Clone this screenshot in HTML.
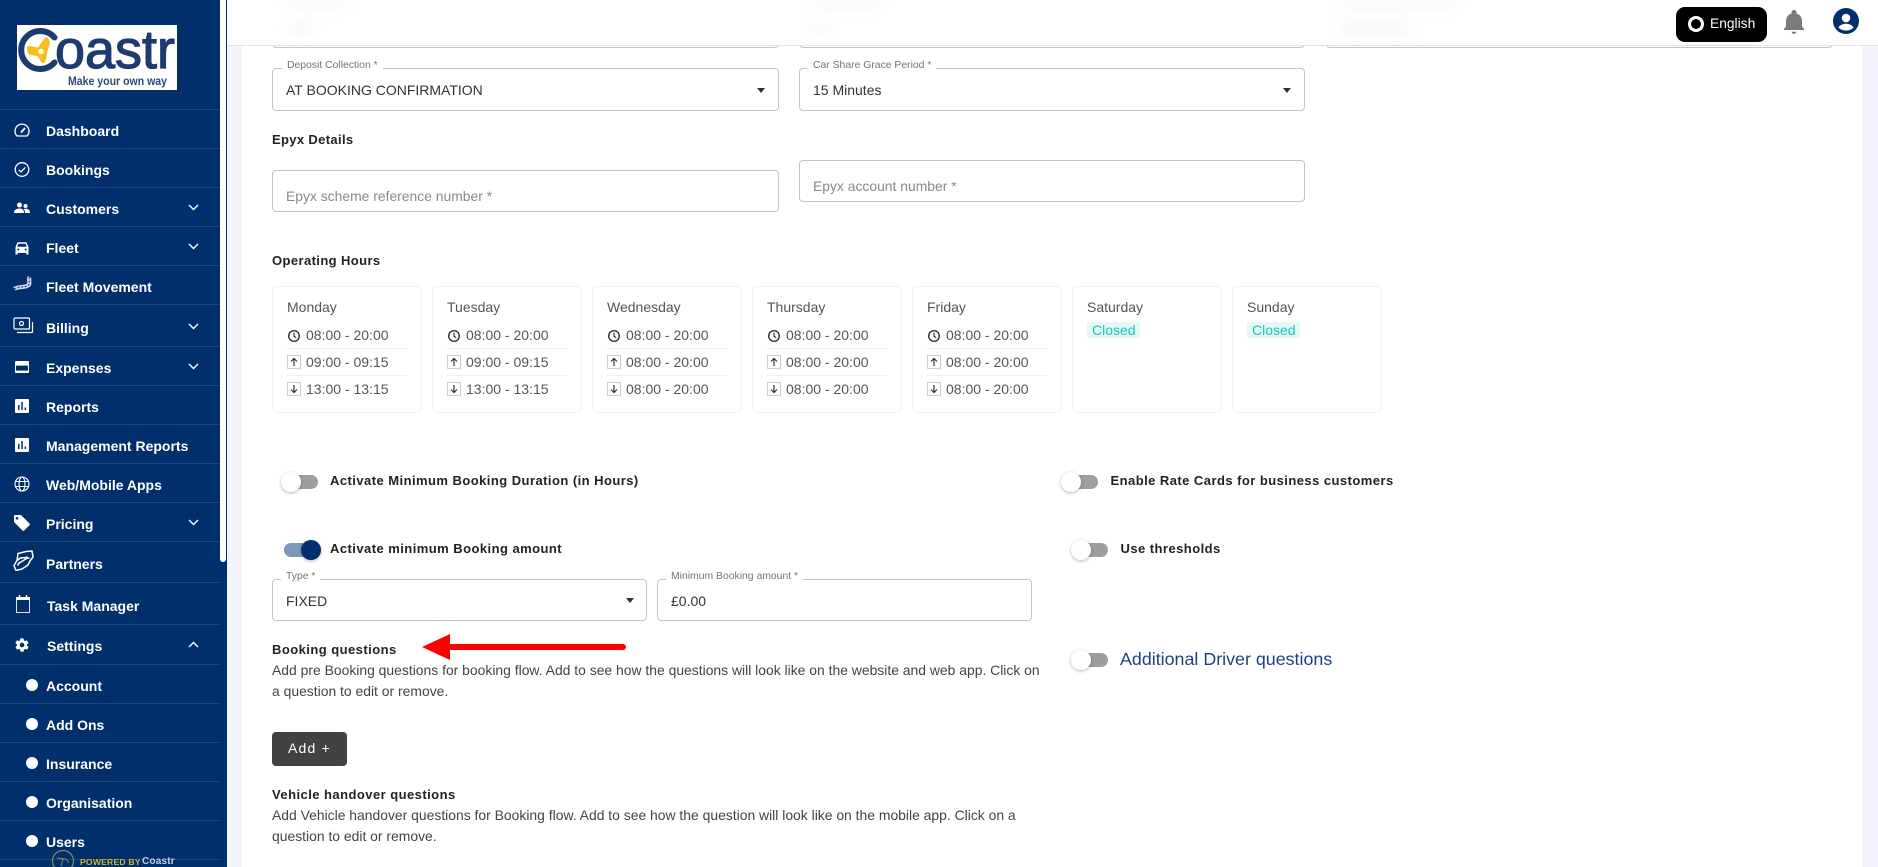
<!DOCTYPE html>
<html lang="en"><head><meta charset="utf-8"><title>Coastr</title>
<style>
*{box-sizing:border-box}
html,body{margin:0;padding:0;width:1878px;height:867px;overflow:hidden;background:#f3f4fb;font-family:"Liberation Sans",sans-serif}
.a{position:absolute}
.t{position:absolute;white-space:nowrap;line-height:20px;height:20px}
#side{position:absolute;left:0;top:0;width:227px;height:867px;background:#002f6c;overflow:hidden}
.sep{position:absolute;left:0;width:220px;height:1px;background:#1c477d}
.m{position:absolute;left:46px;white-space:nowrap;line-height:20px;height:20px;font-weight:700;font-size:14px;color:#fff}
.ic{position:absolute}
.dot{position:absolute;left:26px;width:12px;height:12px;border-radius:50%;background:#fff}
.box{position:absolute;border:1px solid #c4c4c4;border-radius:4px;background:#fff}
.lab{position:absolute;white-space:nowrap;font-size:10.4px;line-height:14px;color:#757575;background:#fff;padding:0 5px}
.val{position:absolute;white-space:nowrap;font-size:14px;line-height:20px;color:#333}
.ph{position:absolute;white-space:nowrap;font-size:13.9px;line-height:20px;color:#8a8a8a}
.arr{position:absolute;width:0;height:0;border-left:4.5px solid transparent;border-right:4.5px solid transparent;border-top:5px solid #333}
.card{position:absolute;top:286px;width:150px;height:127px;border:1px solid #f2f2f2;border-radius:6px;background:#fff;color:#555;font-size:14px}
.card .d{position:absolute;left:14px;top:10px;line-height:20px;white-space:nowrap}
.card .r{position:absolute;left:33px;line-height:20px;white-space:nowrap}
.card .l{position:absolute;left:14px;width:120px;height:1px;background:#efefef}
.card svg{position:absolute;left:14px}
.card .c{position:absolute;left:14px;top:35px;width:53px;height:16px;background:#e5f8f7;color:#10c8bd;border-radius:2px;line-height:16px;padding-left:5px}
.tr{position:absolute;width:35px;height:14px;border-radius:7px;background:#9e9e9e}
.kn{position:absolute;width:20px;height:20px;border-radius:50%;background:#fff;box-shadow:0 1px 3px rgba(0,0,0,.3)}
.b{position:absolute;white-space:nowrap;font-weight:700;font-size:13px;line-height:20px;color:#222;letter-spacing:.45px}
.p{position:absolute;white-space:nowrap;font-size:13.92px;line-height:20px;color:#444}
.blur{position:absolute;background:#e9e9e9;filter:blur(6px);opacity:.4}
</style></head><body>

<!-- content background + card -->
<div class="a" style="left:227px;top:0;width:1651px;height:867px;background:#f3f4fb"></div>
<div class="a" style="left:242px;top:0;width:1620px;height:867px;background:#fff"></div>

<!-- top row of fields (under header) -->
<div class="box" style="left:272px;top:-10px;width:507px;height:58px"></div>
<div class="box" style="left:799px;top:-10px;width:506px;height:58px"></div>
<div class="box" style="left:1326px;top:-10px;width:507px;height:58px"></div>

<!-- header -->
<div class="a" style="left:227px;top:0;width:1651px;height:46px;background:#fff;border-bottom:1px solid #e2e2e2;overflow:hidden">
  <div class="blur" style="left:60px;top:0;width:60px;height:8px"></div>
  <div class="blur" style="left:60px;top:23px;width:26px;height:10px"></div>
  <div class="blur" style="left:584px;top:0;width:70px;height:8px"></div>
  <div class="blur" style="left:584px;top:23px;width:18px;height:10px"></div>
  <div class="blur" style="left:1114px;top:0;width:115px;height:8px"></div>
  <div class="blur" style="left:1114px;top:23px;width:68px;height:11px"></div>
</div>
<div class="a" style="left:1676px;top:7px;width:91px;height:35px;background:#000;border-radius:9px"></div>
<div class="a" style="left:1688px;top:16px;width:16px;height:16px;border:3px solid #fff;border-radius:50%"></div>
<div class="t" style="left:1710px;top:14px;font-size:13.8px;color:#fff">English</div>
<svg class="ic" style="left:1784px;top:10px" width="20" height="24" viewBox="0 0 20 24"><path fill="#7b7b7b" d="M10 24c1.300 0 2.300-1 2.300-2.200H7.700C7.700 23 8.700 24 10 24zM18 16.500V11c0-3.800-2-6.600-5.500-7.400V2.500C12.500 1.100 11.400 0 10 0S7.500 1.100 7.500 2.500v1.100C4 4.400 2 7.200 2 11v5.500L0 18.700V20h20v-1.300z"/></svg>
<svg class="ic" style="left:1833px;top:8px" width="26" height="26" viewBox="0 0 26 26"><circle cx="13" cy="13" r="13" fill="#002f6c"/><circle cx="13" cy="10" r="4.300" fill="#fff"/><path fill="#fff" d="M5.500 19.500c1.500-2.700 4.500-3.700 7.500-3.700s6 1 7.500 3.700c-1.800 2-4.500 3-7.500 3s-5.700-1-7.500-3z"/></svg>

<!-- form -->
<div class="box" style="left:272px;top:68px;width:507px;height:43px"></div>
<div class="lab" style="left:282px;top:59px">Deposit Collection *</div>
<div class="val" style="left:286px;top:80px">AT BOOKING CONFIRMATION</div>
<div class="arr" style="left:756.500px;top:88px"></div>

<div class="box" style="left:799px;top:68px;width:506px;height:43px"></div>
<div class="lab" style="left:808px;top:59px">Car Share Grace Period *</div>
<div class="val" style="left:813px;top:80px">15 Minutes</div>
<div class="arr" style="left:1283px;top:88px"></div>

<div class="b" style="left:272px;top:130px;letter-spacing:.35px">Epyx Details</div>
<div class="box" style="left:272px;top:170px;width:507px;height:42px"></div>
<div class="ph" style="left:286px;top:186px">Epyx scheme reference number *</div>
<div class="box" style="left:799px;top:160px;width:506px;height:42px"></div>
<div class="ph" style="left:813px;top:176px">Epyx account number *</div>

<div class="b" style="left:272px;top:251px;letter-spacing:.4px">Operating Hours</div>

<!-- cards -->
<div class="card" style="left:272px"><div class="d">Monday</div>
<svg style="top:42px" width="14" height="14" viewBox="0 0 14 14"><circle cx="7" cy="7" r="5.300" fill="none" stroke="#333" stroke-width="1.400"/><path d="M7 3.800V7.200L9.300 8.700" fill="none" stroke="#333" stroke-width="1.200"/></svg><div class="r" style="top:38px">08:00 - 20:00</div><div class="l" style="top:61px"></div>
<svg style="top:68px" width="14" height="14" viewBox="0 0 14 14"><rect x=".5" y=".5" width="13" height="13" fill="#fff" stroke="#ccc"/><path d="M7 11V3.500M4 6.500l3-3 3 3" fill="none" stroke="#333" stroke-width="1.200"/></svg><div class="r" style="top:65px">09:00 - 09:15</div><div class="l" style="top:88px"></div>
<svg style="top:95px" width="14" height="14" viewBox="0 0 14 14"><rect x=".5" y=".5" width="13" height="13" fill="#fff" stroke="#ccc"/><path d="M7 3v7.500M4 7.500l3 3 3-3" fill="none" stroke="#333" stroke-width="1.200"/></svg><div class="r" style="top:92px">13:00 - 13:15</div></div>

<div class="card" style="left:432px"><div class="d">Tuesday</div>
<svg style="top:42px" width="14" height="14" viewBox="0 0 14 14"><circle cx="7" cy="7" r="5.300" fill="none" stroke="#333" stroke-width="1.400"/><path d="M7 3.800V7.200L9.300 8.700" fill="none" stroke="#333" stroke-width="1.200"/></svg><div class="r" style="top:38px">08:00 - 20:00</div><div class="l" style="top:61px"></div>
<svg style="top:68px" width="14" height="14" viewBox="0 0 14 14"><rect x=".5" y=".5" width="13" height="13" fill="#fff" stroke="#ccc"/><path d="M7 11V3.500M4 6.500l3-3 3 3" fill="none" stroke="#333" stroke-width="1.200"/></svg><div class="r" style="top:65px">09:00 - 09:15</div><div class="l" style="top:88px"></div>
<svg style="top:95px" width="14" height="14" viewBox="0 0 14 14"><rect x=".5" y=".5" width="13" height="13" fill="#fff" stroke="#ccc"/><path d="M7 3v7.500M4 7.500l3 3 3-3" fill="none" stroke="#333" stroke-width="1.200"/></svg><div class="r" style="top:92px">13:00 - 13:15</div></div>

<div class="card" style="left:592px"><div class="d">Wednesday</div>
<svg style="top:42px" width="14" height="14" viewBox="0 0 14 14"><circle cx="7" cy="7" r="5.300" fill="none" stroke="#333" stroke-width="1.400"/><path d="M7 3.800V7.200L9.300 8.700" fill="none" stroke="#333" stroke-width="1.200"/></svg><div class="r" style="top:38px">08:00 - 20:00</div><div class="l" style="top:61px"></div>
<svg style="top:68px" width="14" height="14" viewBox="0 0 14 14"><rect x=".5" y=".5" width="13" height="13" fill="#fff" stroke="#ccc"/><path d="M7 11V3.500M4 6.500l3-3 3 3" fill="none" stroke="#333" stroke-width="1.200"/></svg><div class="r" style="top:65px">08:00 - 20:00</div><div class="l" style="top:88px"></div>
<svg style="top:95px" width="14" height="14" viewBox="0 0 14 14"><rect x=".5" y=".5" width="13" height="13" fill="#fff" stroke="#ccc"/><path d="M7 3v7.500M4 7.500l3 3 3-3" fill="none" stroke="#333" stroke-width="1.200"/></svg><div class="r" style="top:92px">08:00 - 20:00</div></div>

<div class="card" style="left:752px"><div class="d">Thursday</div>
<svg style="top:42px" width="14" height="14" viewBox="0 0 14 14"><circle cx="7" cy="7" r="5.300" fill="none" stroke="#333" stroke-width="1.400"/><path d="M7 3.800V7.200L9.300 8.700" fill="none" stroke="#333" stroke-width="1.200"/></svg><div class="r" style="top:38px">08:00 - 20:00</div><div class="l" style="top:61px"></div>
<svg style="top:68px" width="14" height="14" viewBox="0 0 14 14"><rect x=".5" y=".5" width="13" height="13" fill="#fff" stroke="#ccc"/><path d="M7 11V3.500M4 6.500l3-3 3 3" fill="none" stroke="#333" stroke-width="1.200"/></svg><div class="r" style="top:65px">08:00 - 20:00</div><div class="l" style="top:88px"></div>
<svg style="top:95px" width="14" height="14" viewBox="0 0 14 14"><rect x=".5" y=".5" width="13" height="13" fill="#fff" stroke="#ccc"/><path d="M7 3v7.500M4 7.500l3 3 3-3" fill="none" stroke="#333" stroke-width="1.200"/></svg><div class="r" style="top:92px">08:00 - 20:00</div></div>

<div class="card" style="left:912px"><div class="d">Friday</div>
<svg style="top:42px" width="14" height="14" viewBox="0 0 14 14"><circle cx="7" cy="7" r="5.300" fill="none" stroke="#333" stroke-width="1.400"/><path d="M7 3.800V7.200L9.300 8.700" fill="none" stroke="#333" stroke-width="1.200"/></svg><div class="r" style="top:38px">08:00 - 20:00</div><div class="l" style="top:61px"></div>
<svg style="top:68px" width="14" height="14" viewBox="0 0 14 14"><rect x=".5" y=".5" width="13" height="13" fill="#fff" stroke="#ccc"/><path d="M7 11V3.500M4 6.500l3-3 3 3" fill="none" stroke="#333" stroke-width="1.200"/></svg><div class="r" style="top:65px">08:00 - 20:00</div><div class="l" style="top:88px"></div>
<svg style="top:95px" width="14" height="14" viewBox="0 0 14 14"><rect x=".5" y=".5" width="13" height="13" fill="#fff" stroke="#ccc"/><path d="M7 3v7.500M4 7.500l3 3 3-3" fill="none" stroke="#333" stroke-width="1.200"/></svg><div class="r" style="top:92px">08:00 - 20:00</div></div>

<div class="card" style="left:1072px"><div class="d">Saturday</div><div class="c">Closed</div></div>
<div class="card" style="left:1232px"><div class="d">Sunday</div><div class="c">Closed</div></div>

<!-- toggles -->
<div class="tr" style="left:283px;top:475px"></div><div class="kn" style="left:281px;top:472px"></div>
<div class="b" style="left:330px;top:471px">Activate Minimum Booking Duration (in Hours)</div>
<div class="tr" style="left:1063px;top:475px"></div><div class="kn" style="left:1061px;top:472px"></div>
<div class="b" style="left:1110.500px;top:471px">Enable Rate Cards for business customers</div>

<div class="tr" style="left:284px;top:543px;background:#7f97bb"></div><div class="kn" style="left:301px;top:540px;background:#002f6c"></div>
<div class="b" style="left:330px;top:539px">Activate minimum Booking amount</div>
<div class="tr" style="left:1073px;top:543px"></div><div class="kn" style="left:1071px;top:540px"></div>
<div class="b" style="left:1120.500px;top:539px">Use thresholds</div>

<div class="box" style="left:272px;top:579px;width:375px;height:42px"></div>
<div class="lab" style="left:281px;top:570px">Type *</div>
<div class="val" style="left:286px;top:591px">FIXED</div>
<div class="arr" style="left:625.500px;top:598px"></div>
<div class="box" style="left:657px;top:579px;width:375px;height:42px"></div>
<div class="lab" style="left:666px;top:570px">Minimum Booking amount *</div>
<div class="val" style="left:671px;top:591px">£0.00</div>

<div class="tr" style="left:1073px;top:653px"></div><div class="kn" style="left:1071px;top:650px"></div>
<div class="t" style="left:1120px;top:649px;font-size:17.85px;color:#1b4283">Additional Driver questions</div>

<div class="b" style="left:272px;top:640px">Booking questions</div>
<svg class="a" style="left:420px;top:632px" width="208" height="30" viewBox="0 0 208 30"><path fill="#f00" d="M2 15 30 2V12H203a3 3 0 0 1 0 6H30V28Z"/></svg>
<div class="p" style="left:272px;top:660px">Add pre Booking questions for booking flow. Add to see how the questions will look like on the website and web app. Click on</div>
<div class="p" style="left:272px;top:681px">a question to edit or remove.</div>

<div class="a" style="left:272px;top:732px;width:75px;height:34px;background:#424242;border-radius:4px"></div>
<div class="t" style="left:288px;top:738px;font-size:14px;color:#fff;letter-spacing:1.2px">Add +</div>

<div class="b" style="left:272px;top:785px">Vehicle handover questions</div>
<div class="p" style="left:272px;top:805px">Add Vehicle handover questions for Booking flow. Add to see how the question will look like on the mobile app. Click on a</div>
<div class="p" style="left:272px;top:826px">question to edit or remove.</div>

<!-- sidebar -->
<div id="side">
  <div class="a" style="left:220px;top:0;width:6px;height:562px;background:#fff;border-radius:0 0 3px 3px"></div>
  <div class="a" style="left:17px;top:25px;width:160px;height:65px;background:#fff"></div>
  <svg class="a" style="left:17px;top:25px" width="160" height="65" viewBox="0 0 160 65">
    <path d="M37.500 12.500A19 19 0 1 0 37.500 37.500" fill="none" stroke="#1d3b6e" stroke-width="6" stroke-linecap="round"/>
    <path fill="#f5c01f" d="M10 22.500Q11 20.500 13 21L21 22.500Q24 18 28 12.500Q30 11.500 31.500 13.500L33 17Q32 23 30 27Q30 32 28 37Q26 39 24 37Q22 33 20 31L12 29.500Q10 28 10 22.500Z"/><circle cx="24" cy="26.500" r="2.700" fill="#fff"/>
    <text x="38" y="43" font-family="Liberation Sans" font-size="54" fill="#1d3b6e" stroke="#1d3b6e" stroke-width="1.200" textLength="120" lengthAdjust="spacingAndGlyphs">oastr</text>
    <text x="51" y="60" font-family="Liberation Sans" font-weight="700" font-size="12" fill="#2b4a7c" textLength="99" lengthAdjust="spacingAndGlyphs">Make your own way</text>
  </svg>

  <div class="sep" style="top:109px"></div><div class="sep" style="top:148px"></div><div class="sep" style="top:187px"></div><div class="sep" style="top:226px"></div><div class="sep" style="top:265px"></div><div class="sep" style="top:304px"></div><div class="sep" style="top:346px"></div><div class="sep" style="top:385px"></div><div class="sep" style="top:424px"></div><div class="sep" style="top:463px"></div><div class="sep" style="top:502px"></div><div class="sep" style="top:541px"></div><div class="sep" style="top:582px"></div><div class="sep" style="top:624px"></div><div class="sep" style="top:664px"></div><div class="sep" style="top:703px"></div><div class="sep" style="top:742px"></div><div class="sep" style="top:781px"></div><div class="sep" style="top:820px"></div><div class="sep" style="top:859px"></div>

  <div class="m" style="top:121px">Dashboard</div>
  <div class="m" style="top:160px">Bookings</div>
  <div class="m" style="top:199px">Customers</div>
  <div class="m" style="top:238px">Fleet</div>
  <div class="m" style="top:277px">Fleet Movement</div>
  <div class="m" style="top:318px">Billing</div>
  <div class="m" style="top:358px">Expenses</div>
  <div class="m" style="top:397px">Reports</div>
  <div class="m" style="top:436px">Management Reports</div>
  <div class="m" style="top:475px">Web/Mobile Apps</div>
  <div class="m" style="top:514px">Pricing</div>
  <div class="m" style="top:554px">Partners</div>
  <div class="m" style="top:596px;left:47px">Task Manager</div>
  <div class="m" style="top:636px;left:47px">Settings</div>
  <div class="m" style="top:676px">Account</div>
  <div class="m" style="top:715px">Add Ons</div>
  <div class="m" style="top:754px">Insurance</div>
  <div class="m" style="top:793px">Organisation</div>
  <div class="m" style="top:832px">Users</div>

  <div class="dot" style="top:679px"></div><div class="dot" style="top:718px"></div><div class="dot" style="top:757px"></div><div class="dot" style="top:796px"></div><div class="dot" style="top:835px"></div>

  <!-- icons -->
  <svg class="ic" style="left:14px;top:123px" width="16" height="14" viewBox="0 0 16 14"><path d="M3 13A7 7 0 1 1 13 13Z" fill="none" stroke="#fff" stroke-width="1.300" stroke-linejoin="round"/><path d="M7 9.500 11 5" stroke="#fff" stroke-width="1.800" fill="none"/></svg>
  <svg class="ic" style="left:14px;top:162px" width="16" height="15" viewBox="0 0 16 15"><circle cx="8" cy="7.500" r="6.800" fill="none" stroke="#fff" stroke-width="1.300"/><path d="M4.800 7.800l2.200 2.200 4.300-4.600" fill="none" stroke="#fff" stroke-width="1.300"/></svg>
  <svg class="ic" style="left:14px;top:202px" width="16" height="12" viewBox="0 0 16 12"><circle cx="5.500" cy="3" r="2.500" fill="#fff"/><circle cx="11.500" cy="4" r="2" fill="#fff"/><path fill="#fff" d="M0 11c0-3 2.500-4.500 5.500-4.500S10 8 10 11zM11 11c0-1.500-.3-3-1.200-4 .6-.2 1.300-.3 1.900-.3 2.300 0 4.300 1.300 4.300 4.300z"/></svg>
  <svg class="ic" style="left:15px;top:241px" width="14" height="14" viewBox="0 0 14 14"><path fill="#fff" d="M2.500 1.200h9L13.500 6v7.500h-2.300V12H2.800v1.500H.5V6zM3.400 2.700 2.200 5.700h9.600l-1.200-3zM2.300 8.500a1 1 0 1 0 2 0 1 1 0 0 0-2 0zm7.400 0a1 1 0 1 0 2 0 1 1 0 0 0-2 0z" fill-rule="evenodd"/></svg>
  <svg class="ic" style="left:13px;top:275px" width="19" height="19" viewBox="0 0 19 19"><path d="M1.500 14C5 11 11 13 15 10.500 18 8.500 15 5.500 16.500 2" fill="none" stroke="#cdd6e3" stroke-width="4.200"/><path d="M1.500 14C5 11 11 13 15 10.500 18 8.500 15 5.500 16.500 2" fill="none" stroke="#002f6c" stroke-width="1" stroke-dasharray="2 1.500"/></svg>
  <svg class="ic" style="left:13px;top:317px" width="21" height="18" viewBox="0 0 21 18"><rect x="1" y="1" width="15.500" height="11" rx="1" fill="none" stroke="#fff" stroke-width="1.200"/><circle cx="8.500" cy="6.500" r="2" fill="none" stroke="#fff" stroke-width="1.200"/><path d="M19.500 5v9.500a1 1 0 0 1-1 1H4" fill="none" stroke="#fff" stroke-width="1.200"/></svg>
  <svg class="ic" style="left:15px;top:361px" width="14" height="12" viewBox="0 0 14 12"><path fill="#fff" fill-rule="evenodd" d="M1 0h12a1 1 0 0 1 1 1v10a1 1 0 0 1-1 1H1a1 1 0 0 1-1-1V1a1 1 0 0 1 1-1zM1 4.600v5h12v-5z"/></svg>
  <svg class="ic" style="left:15px;top:399px" width="14" height="14" viewBox="0 0 14 14"><path fill="#fff" fill-rule="evenodd" d="M1 0h12a1 1 0 0 1 1 1v12a1 1 0 0 1-1 1H1a1 1 0 0 1-1-1V1a1 1 0 0 1 1-1zM3 6v5h1.500V6zM6.300 3v8h1.500V3zM9.600 8.500V11h1.500V8.500z"/></svg>
  <svg class="ic" style="left:15px;top:438px" width="14" height="14" viewBox="0 0 14 14"><path fill="#fff" fill-rule="evenodd" d="M1 0h12a1 1 0 0 1 1 1v12a1 1 0 0 1-1 1H1a1 1 0 0 1-1-1V1a1 1 0 0 1 1-1zM3 6v5h1.500V6zM6.300 3v8h1.500V3zM9.600 8.500V11h1.500V8.500z"/></svg>
  <svg class="ic" style="left:14px;top:476px" width="16" height="16" viewBox="0 0 16 16"><g fill="none" stroke="#fff" stroke-width="1.100"><circle cx="8" cy="8" r="7"/><ellipse cx="8" cy="8" rx="3" ry="7"/><path d="M1.500 5.500h13M1.500 10.500h13"/></g></svg>
  <svg class="ic" style="left:14px;top:515px" width="16" height="16" viewBox="0 0 16 16"><path fill="#fff" d="M1 0h6l8.500 8.500a1.200 1.200 0 0 1 0 1.700l-5.300 5.300a1.200 1.200 0 0 1-1.700 0L0 7V1a1 1 0 0 1 1-1zm2 2a1.300 1.300 0 1 0 0 2.600A1.300 1.300 0 0 0 3 2z" fill-rule="evenodd"/></svg>
  <svg class="ic" style="left:13px;top:550px" width="21" height="21" viewBox="0 0 21 21"><path d="M5 3.500 13 1.500 19 1l1 6-3 4-2 4-6 4-6 1.500-2-5 3-5zM5 10c3-4 6-1 9-3M16 8c-3 0-6 3-8 4-2 .8-3 2-3 3" fill="none" stroke="#fff" stroke-width="1.500" stroke-linejoin="round" stroke-linecap="round"/></svg>
  <svg class="ic" style="left:16px;top:595px" width="14" height="18" viewBox="0 0 14 18"><rect x=".5" y="2.500" width="13" height="15" fill="none" stroke="#dfe6ef" stroke-width="1"/><rect x="0" y="2" width="14" height="3" fill="#fff"/><path d="M3.500 0v3M10.500 0v3" stroke="#fff" stroke-width="1.500"/></svg>
  <svg class="ic" style="left:14px;top:637px" width="16" height="16" viewBox="0 0 24 24"><path fill="#fff" d="M19.400 13c0-.3.100-.6.100-1s0-.7-.1-1l2.100-1.600c.2-.2.200-.4.100-.6l-2-3.500c-.1-.2-.4-.3-.6-.2l-2.500 1c-.5-.4-1.100-.7-1.700-1l-.4-2.700c0-.2-.2-.4-.5-.4h-4c-.2 0-.5.200-.5.400l-.4 2.700c-.6.300-1.200.6-1.700 1l-2.500-1c-.2-.1-.5 0-.6.200l-2 3.500c-.1.200-.1.500.1.600L4.600 11c0 .3-.1.700-.1 1s0 .7.100 1l-2.100 1.600c-.2.200-.2.400-.1.600l2 3.500c.1.200.4.300.6.200l2.500-1c.5.400 1.100.7 1.700 1l.4 2.700c0 .2.200.4.500.4h4c.2 0 .5-.2.500-.4l.4-2.700c.6-.3 1.200-.6 1.700-1l2.500 1c.2.100.5 0 .6-.2l2-3.500c.1-.2.100-.5-.1-.6zM12 15.500a3.500 3.500 0 1 1 0-7 3.500 3.500 0 0 1 0 7z"/></svg>

  <!-- chevrons -->
  <svg class="ic" style="left:188px;top:204px" width="11" height="7" viewBox="0 0 11 7"><path d="M1 1l4.500 4.500L10 1" fill="none" stroke="#fff" stroke-width="1.400"/></svg>
  <svg class="ic" style="left:188px;top:243px" width="11" height="7" viewBox="0 0 11 7"><path d="M1 1l4.500 4.500L10 1" fill="none" stroke="#fff" stroke-width="1.400"/></svg>
  <svg class="ic" style="left:188px;top:323px" width="11" height="7" viewBox="0 0 11 7"><path d="M1 1l4.500 4.500L10 1" fill="none" stroke="#fff" stroke-width="1.400"/></svg>
  <svg class="ic" style="left:188px;top:363px" width="11" height="7" viewBox="0 0 11 7"><path d="M1 1l4.500 4.500L10 1" fill="none" stroke="#fff" stroke-width="1.400"/></svg>
  <svg class="ic" style="left:188px;top:519px" width="11" height="7" viewBox="0 0 11 7"><path d="M1 1l4.500 4.500L10 1" fill="none" stroke="#fff" stroke-width="1.400"/></svg>
  <svg class="ic" style="left:188px;top:641px" width="11" height="7" viewBox="0 0 11 7"><path d="M1 6l4.500-4.500L10 6" fill="none" stroke="#fff" stroke-width="1.400"/></svg>

  <!-- powered by -->
  <svg class="ic" style="left:51px;top:849px" width="26" height="18" viewBox="0 0 26 18"><circle cx="12" cy="12" r="10.500" fill="none" stroke="#8a8a5a" stroke-width="1.200"/><path d="M6 9l9 1 3 4M12 10l-2 7" fill="none" stroke="#8a8a5a" stroke-width="1"/></svg>
  <div class="t" style="left:80px;top:852px;font-size:8.6px;font-weight:700;color:#d8b020;letter-spacing:.2px">POWERED BY</div>
  <div class="t" style="left:142px;top:852px;font-size:10px;font-weight:700;color:#c8d0dc;letter-spacing:.2px">Coastr</div>
</div>
</body></html>
